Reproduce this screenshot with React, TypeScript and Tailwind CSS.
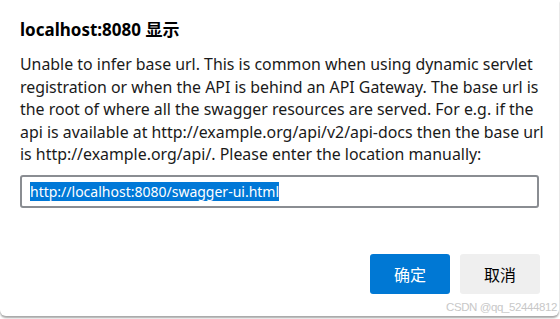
export default function App() {
  const lines = [
    "Unable to infer base url. This is common when using dynamic servlet",
    "registration or when the API is behind an API Gateway. The base url is",
    "the root of where all the swagger resources are served. For e.g. if the",
    "api is available at http://example.org/api/v2/api-docs then the base url",
    "is http://example.org/api/. Please enter the location manually:",
  ];

  return (
    <div className="w-[560px] h-[319px] bg-white overflow-hidden relative font-['Segoe_UI','Noto_Sans','Noto_Sans_CJK_SC',sans-serif] text-[#1a1a1a]">
      <div className="w-[559px] h-[316px] bg-white rounded-b-md shadow-[0_2px_2px_rgba(0,0,0,0.35)] px-5 pt-[18px]">
        <h1 className="text-[17px] font-bold leading-[24px] text-black">localhost:8080 显示</h1>
        <p className="mt-[11px] text-[15.9px] leading-[22.5px] whitespace-nowrap">
          {lines.map((l, i) => (
            <span key={i} className="block">
              {l}
            </span>
          ))}
        </p>
        <div className="mt-[9px] w-[519px] h-[33px] border-2 border-[#8a8d92] rounded-[3px] flex items-center pl-[8px]">
          <span className="bg-[#0078d7] text-white text-[14px] leading-[19px]">
            http://localhost:8080/swagger-ui.html
          </span>
        </div>
        <div className="mt-[46px] flex justify-end gap-[10px] -mr-px">
          <button className="w-[80px] h-[40px] rounded-[3px] bg-[#0078d4] text-white text-[16px] font-['Noto_Sans_CJK_SC',sans-serif]">
            确定
          </button>
          <button className="w-[80px] h-[40px] rounded-[3px] bg-[#efefef] text-black text-[16px] font-['Noto_Sans_CJK_SC',sans-serif]">
            取消
          </button>
        </div>
      </div>
      <span className="absolute right-[3px] bottom-[5px] text-[11.5px] leading-[14px] tracking-[-0.4px] text-[#c8c8c8] font-['Liberation_Sans',sans-serif]">
        CSDN @qq_52444812
      </span>
    </div>
  );
}
